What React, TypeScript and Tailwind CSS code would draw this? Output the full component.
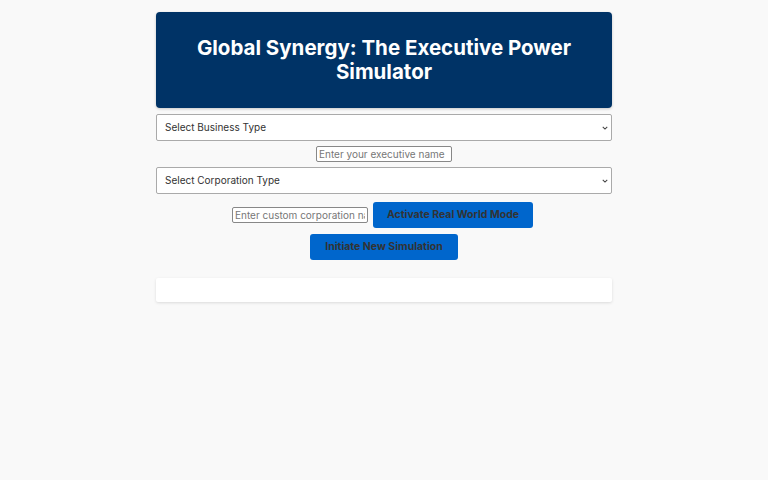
function Chevron() {
  return (
    <svg
      viewBox="0 0 8 5"
      className="pointer-events-none absolute right-[4px] top-1/2 h-[4px] w-[6px] -translate-y-1/2"
      fill="none"
      stroke="#444"
      strokeWidth="1.4"
    >
      <path d="M1 1l3 3 3-3" />
    </svg>
  );
}

function SelectBox({ label }: { label: string }) {
  return (
    <div className="relative w-full">
      <select className="block h-[27px] w-full appearance-none rounded-[2px] border border-[#aaaaaa] bg-white pl-2 pr-5 text-[10px] text-[#333]">
        <option>{label}</option>
      </select>
      <Chevron />
    </div>
  );
}

export default function App() {
  const font = { fontFamily: 'Inter, "Open Sans", sans-serif' };
  return (
    <div className="min-h-[480px] bg-[#f9f9f9] pt-3" style={font}>
      <div className="mx-auto flex w-[456px] flex-col items-center">
        {/* Header */}
        <div className="w-full rounded bg-[#003366] px-6 py-6 text-center shadow-[0_1px_3px_rgba(0,0,0,0.2)]">
          <h1 className="text-[20.5px] font-bold leading-6 text-white">
            Global Synergy: The Executive Power Simulator
          </h1>
        </div>

        <div className="mt-1.5 w-full">
          <SelectBox label="Select Business Type" />
        </div>

        <input
          placeholder="Enter your executive name"
          className="mt-[5px] h-4 w-[136px] rounded-[2px] border border-[#888] bg-white px-[2px] text-[10px] placeholder:text-[#777]"
        />

        <div className="mt-[5px] w-full">
          <SelectBox label="Select Corporation Type" />
        </div>

        <div className="mt-2 flex items-center gap-[5px] pr-[3px]">
          <input
            placeholder="Enter custom corporation name"
            className="h-4 w-[136px] rounded-[2px] border border-[#888] bg-white px-[2px] text-[10px] placeholder:text-[#777]"
          />
          <button className="h-[26px] w-[160px] rounded-[3px] bg-[#0066cc] text-[10.5px] font-bold text-[#333]">
            Activate Real World Mode
          </button>
        </div>

        <button className="mt-1.5 h-[26px] w-[148px] rounded-[3px] bg-[#0066cc] text-[10.5px] font-bold text-[#333]">
          Initiate New Simulation
        </button>

        <div className="mt-[18px] h-6 w-full rounded-[2px] bg-white shadow-[0_1px_3px_rgba(0,0,0,0.12)]" />
      </div>
    </div>
  );
}
